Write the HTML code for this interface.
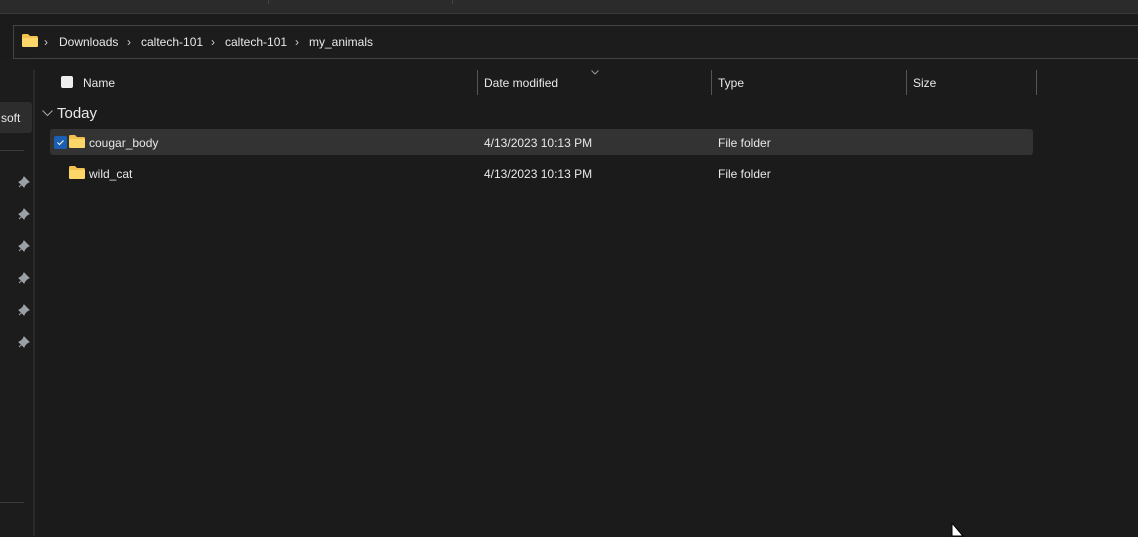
<!DOCTYPE html>
<html><head><meta charset="utf-8"><style>
*{margin:0;padding:0;box-sizing:border-box}
body{width:1138px;height:536px;background:#1b1b1b;overflow:hidden;position:relative;font-family:"Segoe UI","Liberation Sans",sans-serif;color:#fff;font-size:12px}
.a{position:absolute}
.t{color:#e8e8e8;white-space:nowrap;margin-top:1px}
.pin{position:absolute;left:18px;width:12px;height:12px}
</style></head><body>
<div class="a" style="left:0;top:0;width:1138px;height:14px;background:#2b2b2b;border-bottom:1px solid #3a3a3a"></div>
<div class="a" style="left:268px;top:0;width:1px;height:4px;background:#444"></div>
<div class="a" style="left:452px;top:0;width:1px;height:4px;background:#444"></div>
<div class="a" style="left:13px;top:25px;width:1130px;height:34px;border:1px solid #444;background:#1c1c1c"></div>
<svg class="a" style="left:22px;top:34px" width="16" height="13" viewBox="0 0 16 13"><path d="M0 1.5Q0 0 1.5 0H6L8 2H14.5Q16 2 16 3.5V11.5Q16 13 14.5 13H1.5Q0 13 0 11.5Z" fill="#f2c14e"/><path d="M0 4H16V11.5Q16 13 14.5 13H1.5Q0 13 0 11.5Z" fill="#fcd669"/></svg>
<div class="a t" style="left:44px;top:34px;font-size:12px;color:#ccc">›</div>
<div class="a t" style="left:59px;top:34px">Downloads</div>
<div class="a t" style="left:127px;top:34px;color:#ccc">›</div>
<div class="a t" style="left:141px;top:34px">caltech-101</div>
<div class="a t" style="left:211px;top:34px;color:#ccc">›</div>
<div class="a t" style="left:225px;top:34px">caltech-101</div>
<div class="a t" style="left:295px;top:34px;color:#ccc">›</div>
<div class="a t" style="left:309px;top:34px">my_animals</div>
<div class="a" style="left:0;top:59px;width:33px;height:477px;background:#1c1c1c"></div>
<div class="a" style="left:33px;top:70px;width:2px;height:466px;background:#2a2a2a"></div>
<div class="a" style="left:0;top:102px;width:32px;height:31px;background:#2d2d2d;border-radius:0 3px 3px 0"></div>
<div class="a t" style="left:1px;top:110px">soft</div>
<div class="a" style="left:0;top:150px;width:24px;height:1px;background:#3a3a3a"></div>
<div class="a" style="left:0;top:502px;width:24px;height:1px;background:#3a3a3a"></div>
<svg class="pin" style="top:176px" viewBox="0 0 12 12"><path d="M6 1L11 6L9 7L7 9L6 11L1 6L3 5L5 3Z M4 8L1 11" fill="#9aa0a6" stroke="#9aa0a6"/></svg>
<svg class="pin" style="top:208px" viewBox="0 0 12 12"><path d="M6 1L11 6L9 7L7 9L6 11L1 6L3 5L5 3Z M4 8L1 11" fill="#9aa0a6" stroke="#9aa0a6"/></svg>
<svg class="pin" style="top:240px" viewBox="0 0 12 12"><path d="M6 1L11 6L9 7L7 9L6 11L1 6L3 5L5 3Z M4 8L1 11" fill="#9aa0a6" stroke="#9aa0a6"/></svg>
<svg class="pin" style="top:272px" viewBox="0 0 12 12"><path d="M6 1L11 6L9 7L7 9L6 11L1 6L3 5L5 3Z M4 8L1 11" fill="#9aa0a6" stroke="#9aa0a6"/></svg>
<svg class="pin" style="top:304px" viewBox="0 0 12 12"><path d="M6 1L11 6L9 7L7 9L6 11L1 6L3 5L5 3Z M4 8L1 11" fill="#9aa0a6" stroke="#9aa0a6"/></svg>
<svg class="pin" style="top:336px" viewBox="0 0 12 12"><path d="M6 1L11 6L9 7L7 9L6 11L1 6L3 5L5 3Z M4 8L1 11" fill="#9aa0a6" stroke="#9aa0a6"/></svg>
<div class="a" style="left:61px;top:76px;width:12px;height:12px;background:#eee;border-radius:2px"></div>
<div class="a t" style="left:83px;top:75px">Name</div>
<div class="a" style="left:477px;top:70px;width:1px;height:25px;background:#555"></div>
<div class="a t" style="left:484px;top:75px">Date modified</div>
<svg class="a" style="left:591px;top:70px" width="8" height="5"><path d="M0.5 0.5L4 4L7.5 0.5" stroke="#999" fill="none"/></svg>
<div class="a" style="left:711px;top:70px;width:1px;height:25px;background:#555"></div>
<div class="a t" style="left:718px;top:75px">Type</div>
<div class="a" style="left:906px;top:70px;width:1px;height:25px;background:#555"></div>
<div class="a t" style="left:913px;top:75px">Size</div>
<div class="a" style="left:1036px;top:70px;width:1px;height:25px;background:#555"></div>
<svg class="a" style="left:42px;top:110px" width="11" height="7"><path d="M0.5 0.5L5.5 5.5L10.5 0.5" stroke="#aaa" fill="none"/></svg>
<div class="a t" style="left:57px;top:104px;font-size:15px">Today</div>
<div class="a" style="left:50px;top:129px;width:983px;height:26px;background:#333;border-radius:3px"></div>
<div class="a" style="left:54px;top:136px;width:13px;height:13px;background:#1a5fb4;border-radius:2px"></div>
<svg class="a" style="left:56px;top:138px" width="9" height="9"><path d="M1.5 4.5L3.5 6.5L7.5 2.5" stroke="#fff" fill="none" stroke-width="1"/></svg>
<svg class="a" style="left:69px;top:135px" width="16" height="13" viewBox="0 0 16 13"><path d="M0 1.5Q0 0 1.5 0H6L8 2H14.5Q16 2 16 3.5V11.5Q16 13 14.5 13H1.5Q0 13 0 11.5Z" fill="#f2c14e"/><path d="M0 4H16V11.5Q16 13 14.5 13H1.5Q0 13 0 11.5Z" fill="#fcd669"/></svg>
<div class="a t" style="left:89px;top:135px">cougar_body</div>
<div class="a t" style="left:484px;top:135px">4/13/2023 10:13 PM</div>
<div class="a t" style="left:718px;top:135px">File folder</div>
<svg class="a" style="left:69px;top:166px" width="16" height="13" viewBox="0 0 16 13"><path d="M0 1.5Q0 0 1.5 0H6L8 2H14.5Q16 2 16 3.5V11.5Q16 13 14.5 13H1.5Q0 13 0 11.5Z" fill="#f2c14e"/><path d="M0 4H16V11.5Q16 13 14.5 13H1.5Q0 13 0 11.5Z" fill="#fcd669"/></svg>
<div class="a t" style="left:89px;top:166px">wild_cat</div>
<div class="a t" style="left:484px;top:166px">4/13/2023 10:13 PM</div>
<div class="a t" style="left:718px;top:166px">File folder</div>
<svg class="a" style="left:951px;top:523px" width="14" height="14"><path d="M1 0V13H12Z" fill="#fff" stroke="#000" stroke-width="1"/></svg>
</body></html>
